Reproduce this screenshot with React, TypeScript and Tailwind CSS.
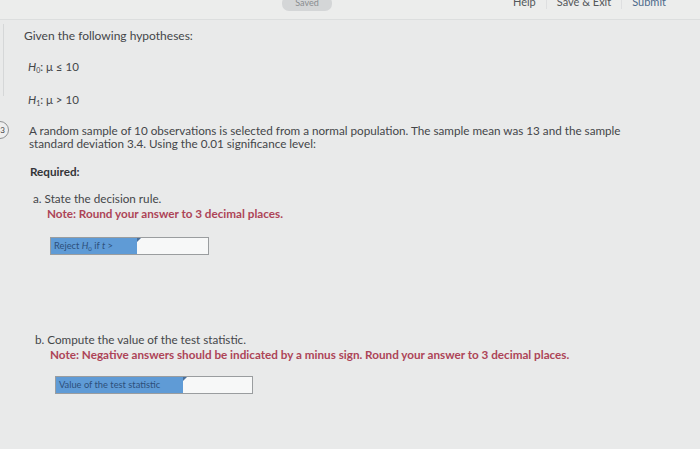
import React from 'react';

const font = { fontFamily: 'Lato, "Open Sans", Arial, sans-serif' };

const AnswerRow: React.FC<{ label: React.ReactNode; labelW: string; inputW: string }> = ({ label, labelW, inputW }) => (
  <div className="inline-flex h-[18px] border border-[#9a9d9f] bg-white">
    <div className={`${labelW} bg-[#5f9bd6] text-[#2d4f7a] text-[9.3px] leading-[16px] pl-[3px] whitespace-nowrap`}>{label}</div>
    <div className={`${inputW} bg-[#f7f8f8] relative`}>
      <span className="absolute left-0 top-0 w-0 h-0 border-t-[4px] border-r-[4px] border-t-[#4a6f9a] border-r-transparent" />
    </div>
  </div>
);

export default function App() {
  return (
    <div className="w-[700px] h-[449px] overflow-hidden bg-[#e9eaea] text-[#444649] relative" style={font}>
      {/* top bar */}
      <div className="h-[20px] relative border-b border-[#dcdede] bg-[#ecedec]">
        <div className="absolute left-[282px] -top-[4px] w-[50px] h-[15px] rounded-[7px] bg-[#d4d6d7] text-[9px] text-center leading-[9px] pt-[1px] text-[#8a8d90]">
          <span className="block mt-[1px]">Saved</span>
        </div>
        <div className="absolute right-[34px] -top-[5px] flex text-[11px] text-[#53575a] leading-[14px]">
          <span className="pr-[10px]">Help</span>
          <span className="px-[10px] border-l border-[#dedfe0]">Save &amp; Exit</span>
          <span className="pl-[10px] border-l border-[#dedfe0] text-[#4c6a8a]">Submit</span>
        </div>
      </div>

      {/* left question edge */}
      <div className="absolute left-0 top-[24px] w-[4px] h-[72px] border-r border-[#d5d7d8]" />
      <div className="absolute -left-[9px] top-[121px] w-[18px] h-[18px] rounded-full border border-[#8e9193] bg-[#eeeeee] text-[8px] leading-[16px] text-right pr-[3px] text-[#444]">3</div>

      <div className="pl-[24px] pt-[8px] text-[12px] leading-[15px]">
        <p>Given the following hypotheses:</p>
        <p className="mt-[16px] pl-[4px] text-[11.5px]">
          <i>H</i><sub className="text-[7px]">0</sub>: μ ≤ 10
        </p>
        <p className="mt-[18px] pl-[4px] text-[11.5px]">
          <i>H</i><sub className="text-[7px]">1</sub>: μ &gt; 10
        </p>

        <p className="mt-[17px] pl-[5px] pr-[60px] leading-[13px] text-[11.7px]">
          A random sample of 10 observations is selected from a normal population. The sample mean was 13 and the sample standard deviation 3.4. Using the 0.01 significance level:
        </p>

        <p className="mt-[14px] pl-[6px] font-bold text-[11.7px] text-[#333538]">Required:</p>

        <div className="mt-[12px] pl-[9px] text-[11.7px] leading-[15px]">
          <p>a. State the decision rule.</p>
          <p className="pl-[14px] font-bold text-[#ad4457]">Note: Round your answer to 3 decimal places.</p>
          <div className="pl-[17px] mt-[16px] leading-none">
            <AnswerRow
              labelW="w-[86px]"
              inputW="w-[71px]"
              label={<span>Reject <i>H</i><sub className="text-[6px]">0</sub> if <i>t</i> &gt;</span>}
            />
          </div>
        </div>

        <div className="mt-[77px] pl-[11px] text-[11.7px] leading-[15px]">
          <p>b. Compute the value of the test statistic.</p>
          <p className="pl-[15px] font-bold text-[#ad4457]">Note: Negative answers should be indicated by a minus sign. Round your answer to 3 decimal places.</p>
          <div className="pl-[20px] mt-[14px] leading-none">
            <AnswerRow labelW="w-[127px]" inputW="w-[69px]" label="Value of the test statistic" />
          </div>
        </div>
      </div>
    </div>
  );
}
